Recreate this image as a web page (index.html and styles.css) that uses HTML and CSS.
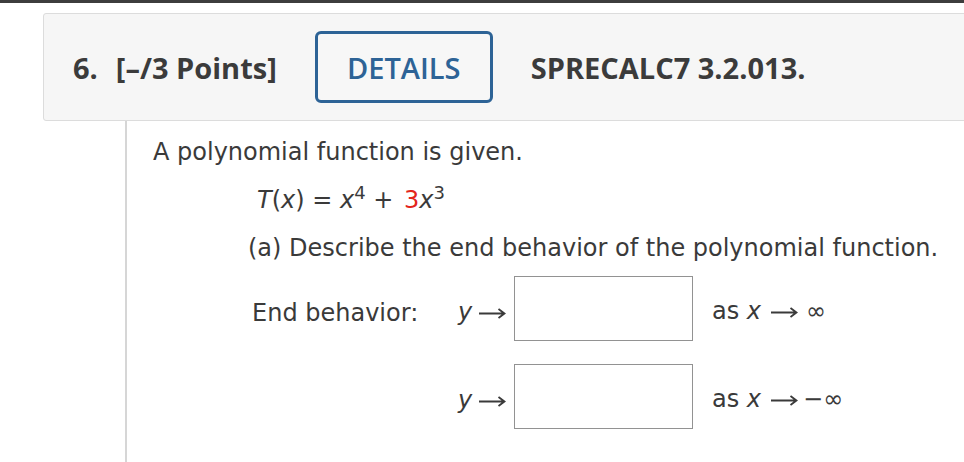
FILE: index.html
```html
<!DOCTYPE html>
<html lang="en">
<head>
<meta charset="utf-8">
<title>Question 6</title>
<link rel="stylesheet" href="styles.css">
</head>
<body>
<div class="topbar"></div>
<div class="question">
  <div class="qhead">
    <span class="qnum">6.</span>
    <span class="qpoints">[–/3 Points]</span>
    <button class="details">DETAILS</button>
    <span class="qref">SPRECALC7 3.2.013.</span>
  </div>
  <div class="qbody">
    <p class="intro">A polynomial function is given.</p>
    <p class="formula"><i>T</i>(<i>x</i>) = <i>x</i><sup>4</sup> + <span class="red">3</span><i>x</i><sup>3</sup></p>
    <p class="part">(a) Describe the end behavior of the polynomial function.</p>
    <div class="ends">
      <div class="endrow">
        <span class="label">End behavior:</span>
        <span class="yarrow"><i>y</i><svg class="arrow" width="27" height="12" viewBox="0 0 27 12"><path d="M0 6.5H25M19.5 2L25.5 6.5L19.5 11" fill="none" stroke="currentColor" stroke-width="1.8"/></svg></span>
        <span class="answer"></span>
        <span class="asx">as <i>x</i><svg class="arrow" width="27" height="12" viewBox="0 0 27 12"><path d="M0 6.5H25M19.5 2L25.5 6.5L19.5 11" fill="none" stroke="currentColor" stroke-width="1.8"/></svg>∞</span>
      </div>
      <div class="endrow">
        <span class="label"></span>
        <span class="yarrow"><i>y</i><svg class="arrow" width="27" height="12" viewBox="0 0 27 12"><path d="M0 6.5H25M19.5 2L25.5 6.5L19.5 11" fill="none" stroke="currentColor" stroke-width="1.8"/></svg></span>
        <span class="answer"></span>
        <span class="asx">as <i>x</i><svg class="arrow neg" width="27" height="12" viewBox="0 0 27 12"><path d="M0 6.5H25M19.5 2L25.5 6.5L19.5 11" fill="none" stroke="currentColor" stroke-width="1.8"/></svg>−∞</span>
      </div>
    </div>
  </div>
</div>
</body>
</html>
```
FILE: styles.css
```css
html, body {
  margin: 0;
  padding: 0;
  background: #ffffff;
  overflow: hidden;
}
body {
  width: 964px;
  height: 462px;
  font-family: "DejaVu Sans", Verdana, sans-serif;
  color: #3a3a3a;
}
.topbar {
  height: 3px;
  background: #3d3d3d;
}
.question {
  margin-top: 10px;
}
.qhead {
  margin-left: 43px;
  margin-right: -20px;
  height: 106px;
  border: 1px solid #dcdcdc;
  border-radius: 3px;
  background: #f6f6f6;
  display: flex;
  align-items: center;
  padding-left: 29px;
  font-family: "Open Sans", "Liberation Sans", sans-serif;
  font-weight: 700;
  font-size: 29px;
  color: #3b3b3b;
}
.qnum {
  margin-right: 18px;
}
.details {
  margin-left: 38px;
  width: 178px;
  height: 72px;
  border: 3px solid #2d6396;
  border-radius: 6px;
  background: #f7f7f7;
  color: #2d6396;
  font-family: "Open Sans", "Liberation Sans", sans-serif;
  font-weight: 600;
  font-size: 29px;
  padding: 0;
}
.qref {
  margin-left: 38px;
}
.qbody {
  margin-left: 125px;
  border-left: 2px solid #d6d6d6;
  padding: 17px 0 40px 26px;
  font-size: 24px;
  line-height: 29px;
}
.qbody p {
  margin: 0;
}
.formula {
  margin-top: 19px !important;
  padding-left: 104px;
}
.formula sup {
  font-size: 18px;
  line-height: 0;
  vertical-align: 9px;
}
.red {
  color: #e3241b;
  margin-left: 3px;
}
.part {
  margin-top: 19px !important;
  padding-left: 95px;
}
.ends {
  margin-top: 13px;
  padding-left: 99px;
  display: flex;
  flex-direction: column;
  gap: 23px;
}
.endrow {
  display: flex;
  align-items: center;
}
.label {
  width: 206px;
  padding-top: 10px;
}
.yarrow {
  width: 56px;
  padding-top: 7px;
}
.arrow {
  margin-left: 7px;
  vertical-align: 1px;
}
.answer {
  width: 177px;
  height: 63px;
  border: 1.5px solid #929292;
  background: #ffffff;
}
.asx {
  margin-left: 19px;
  padding-top: 6px;
}
.asx .arrow {
  margin: 0 8px 0 10px;
}
.asx .arrow.neg {
  margin-right: 5px;
}
```
